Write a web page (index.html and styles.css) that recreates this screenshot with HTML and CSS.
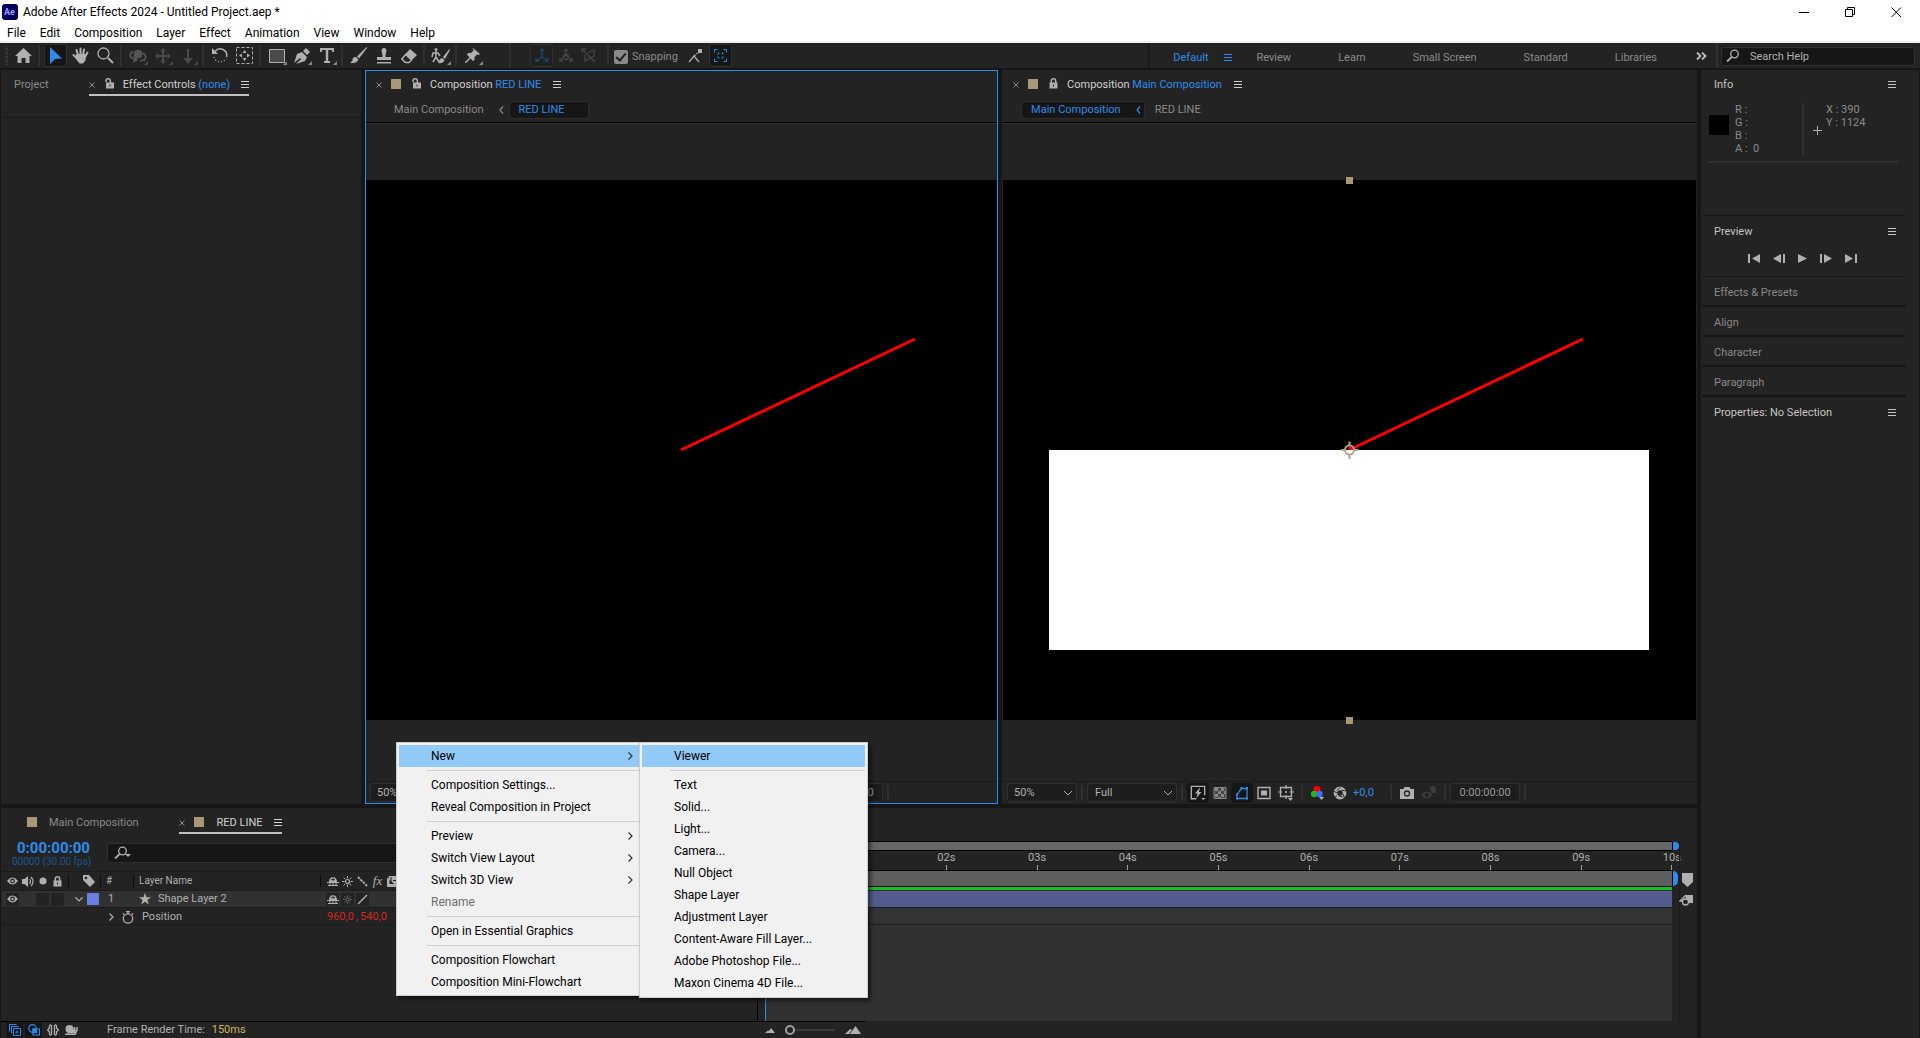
FILE: index.html
```html
<!DOCTYPE html>
<html lang="en">
<head>
  <meta charset="UTF-8">
  <meta name="viewport" content="width=device-width, initial-scale=1.0">
  <title>Adobe After Effects 2024 - Untitled Project.aep *</title>
  <link rel="stylesheet" href="styles.css">
</head>
<body>
  <!-- shared icons -->
  <svg class="sprite" width="0" height="0">
    <symbol id="menu" viewBox="0 0 8 7"><path d="M0 .5h8M0 3.5h8M0 6.5h8" stroke="currentColor"/></symbol>
    <symbol id="close" viewBox="0 0 6 6"><path d="M.5 .5l5 5M5.500 .5l-5 5" stroke="currentColor"/></symbol>
    <symbol id="unlock" viewBox="0 0 9 11"><path d="M1 4V3a2.200 2.200 0 0 1 4.400 0v2" fill="none" stroke="currentColor" stroke-width="1.500"/><path d="M1 4.500h8V10.500H1zM4.500 6.500v2h1v-2z" fill="currentColor" fill-rule="evenodd"/></symbol>
    <symbol id="lock" viewBox="0 0 9 11"><path d="M2.300 5V3a2.200 2.200 0 0 1 4.400 0v2" fill="none" stroke="currentColor" stroke-width="1.500"/><path d="M.5 4.500h8V10.500h-8zM4 6.500v2h1v-2z" fill="currentColor" fill-rule="evenodd"/></symbol>
    <symbol id="search" viewBox="0 0 14 14"><circle cx="8.500" cy="5" r="3.800" fill="none" stroke="currentColor" stroke-width="1.300"/><path d="M5.800 7.800L1 12.500" stroke="currentColor" stroke-width="1.800"/></symbol>
    <symbol id="down" viewBox="0 0 8 5"><path d="M.5 .5L4 4 7.500 .5" fill="none" stroke="currentColor" stroke-width="1.200"/></symbol>
    <symbol id="right" viewBox="0 0 5 8"><path d="M.5 .5L4 4 .5 7.500" fill="none" stroke="currentColor" stroke-width="1.200"/></symbol>
    <symbol id="left" viewBox="0 0 5 8"><path d="M4 .5L1 4l3 3.500" fill="none" stroke="currentColor" stroke-width="1.200"/></symbol>
    <symbol id="eye" viewBox="0 0 12 8"><path d="M0 4Q6 -3.500 12 4Q6 11.500 0 4z" fill="currentColor"/><circle cx="6" cy="4" r="2.600" fill="#232323"/><circle cx="6" cy="4" r="1.300" fill="currentColor"/></symbol>
    <symbol id="shy" viewBox="0 0 12 11"><path d="M2 6a4 5 0 0 1 8 0z" fill="currentColor"/><path d="M0 6.500h12M6 5v5M1 9.500h10M3 9.500V7M9 9.500V7" stroke="currentColor" fill="none"/><path d="M6 1v4M4 3.500h4" stroke="#232323" stroke-width=".8"/></symbol>
    <symbol id="sun" viewBox="0 0 11 11"><circle cx="5.500" cy="5.500" r="2" fill="none" stroke="currentColor" stroke-width="1.200"/><path d="M5.500 0v2.500M5.500 8.500V11M0 5.500h2.500M8.500 5.500H11M1.600 1.600l1.600 1.600M7.800 7.800l1.600 1.600M1.600 9.400l1.600-1.600M7.800 3.200l1.600-1.600" stroke="currentColor"/></symbol>
    <symbol id="fast" viewBox="0 0 18 18"><path d="M7 15.500H1.500V1.500h15v10" fill="none" stroke="currentColor" stroke-width="1.500"/><path d="M11.500 2.500L5.500 9.500h3L7 15l6-7h-3z" fill="currentColor"/><path d="M12.500 14.500h5L15 17z" fill="currentColor"/></symbol>
    <symbol id="grid" viewBox="0 0 14 14"><path d="M1 1.500h12v11H1z" fill="#444" stroke="#888"/><path d="M2 2h3v3H2zM8 2h3v3H8zM5 5h3v3H5zM11 5h1.500v3H11zM2 8h3v3H2zM8 8h3v3H8zM5 11h3v1.500H5z" fill="#888"/></symbol>
    <symbol id="mask" viewBox="0 0 16 14"><path d="M3 12.500V8.500L7.500 2.500H13V12.500z" fill="none" stroke="currentColor" stroke-width="1.300"/><path d="M2 11.500h2v2H2zM12 11.500h2v2h-2zM12 1h2v2h-2zM6.500 1h2v2h-2zM2 7.500h2v2H2z" fill="currentColor"/></symbol>
    <symbol id="region" viewBox="0 0 14 14"><path d="M1 1.500h12v11H1z" fill="none" stroke="currentColor" stroke-width="1.400"/><path d="M4 4.500h6v5H4z" fill="currentColor"/></symbol>
    <symbol id="guides" viewBox="0 0 16 16"><path d="M2.500 2.500h11v9h-11z" fill="none" stroke="currentColor" stroke-width="1.300"/><path d="M8 0v4M8 10v4M0 7h4M11.500 7H16M8 6v2M7 7h2" stroke="currentColor" stroke-width="1.200"/><path d="M10 13h5l-2.500 3z" fill="currentColor"/></symbol>
    <symbol id="aperture" viewBox="0 0 14 14"><circle cx="7" cy="7" r="4.600" fill="none" stroke="currentColor" stroke-width="3.600"/><path d="M4 4.500L8 .5M8.500 4.200l5 .8M10 8l1.500 4M5.500 9.800L10 11M4 9.500L2 11M4 7L.5 5" stroke="#232323" stroke-width=".9"/></symbol>
    <symbol id="camera" viewBox="0 0 14 12"><path d="M0 2h3.500l1-2h5l1 2H14v10H0z" fill="currentColor"/><circle cx="7" cy="6.500" r="2.500" fill="none" stroke="#232323" stroke-width="1.300"/></symbol>
    <symbol id="snapeye" viewBox="0 0 16 14"><path d="M8 1h2l.5-1h3l.5 1h1v6h-4z" fill="currentColor"/><path d="M0 9q6-7 12 0q-6 7-12 0z" fill="currentColor"/><circle cx="6" cy="9" r="2" fill="#232323"/></symbol>
  </svg>

  <header class="window-bar">
    <div class="title">
      <svg width="16" height="16"><rect width="16" height="16" rx="3" fill="#00005b"/><text x="2" y="11" class="logo">Ae</text></svg>
      <span>Adobe After Effects 2024 - Untitled Project.aep *</span>
      <div class="window-buttons">
        <button aria-label="Minimize"><svg width="11" height="11"><path d="M0 5.500h10" stroke="#000"/></svg></button>
        <button aria-label="Restore"><svg width="11" height="11"><path d="M.5 2.500h7v7h-7zM2.500 2.500v-2h7v7h-2" fill="none" stroke="#000"/></svg></button>
        <button aria-label="Close"><svg width="11" height="11"><path d="M.5 .5l9.500 9.500M10 .5L.5 10" stroke="#000"/></svg></button>
      </div>
    </div>
    <nav class="menubar">
      <button>File</button><button>Edit</button><button>Composition</button><button>Layer</button><button>Effect</button><button>Animation</button><button>View</button><button>Window</button><button>Help</button>
    </nav>
  </header>

  <div class="toolbar">
    <i class="grip"></i>
    <button aria-label="Home"><svg width="17" height="16"><path d="M8.500 0L17 8h-2.500v7h-4v-5h-4v5h-4V8H0z" fill="#b0b0b0"/></svg></button>
    <i class="sep"></i>
    <button class="on" aria-label="Selection"><svg width="13" height="17"><path d="M1 0l12 11.500-7 .5L1 17z" fill="#2d8ceb"/></svg></button>
    <button aria-label="Hand"><svg width="17" height="17" fill="none" stroke="#b0b0b0" stroke-width="2" stroke-linecap="round"><path d="M6 8L4.500 3M8.500 8V1.500M11 8l1-5.500M13 10l2.500-4.500M4.500 11L1.500 8"/><path d="M5 8h8l-.5 5-2 2.500H8L5 12z" fill="#b0b0b0"/></svg></button>
    <button aria-label="Zoom"><svg width="17" height="17" fill="none" stroke="#b0b0b0"><circle cx="6.500" cy="6.500" r="5.500" stroke-width="1.300"/><path d="M11 11l5 5" stroke-width="2"/></svg></button>
    <i class="sep"></i>
    <button class="off more" aria-label="Orbit"><svg width="18" height="16" fill="none" stroke="#555"><circle cx="9" cy="6" r="4" fill="#555"/><path d="M4 3Q-1 7 3 10l4 2M5 8l2.500 4L4 14M14 5q5 4 1 7l-4 1" stroke-width="1.800"/></svg></button>
    <button class="off more" aria-label="Pan"><svg width="16" height="16"><path d="M8 0l3 3.500H9V7h3.500V5L16 8l-3.500 3V9H9v3.500h2L8 16l-3-3.500h2V9H3.500v2L0 8l3.500-3v2H7V3.500H5z" fill="#4a4a4a"/></svg></button>
    <button class="off more" aria-label="Dolly"><svg width="12" height="16"><path d="M5 1h2v9h4l-5 6-5-6h4z" fill="#4a4a4a"/></svg></button>
    <i class="sep"></i>
    <button aria-label="Rotate"><svg width="18" height="17" fill="none" stroke="#b0b0b0"><path d="M4 4.500A6.500 6.500 0 0 1 15.500 10" stroke-width="1.500"/><path d="M1 1v6h6z" fill="#b0b0b0" stroke="none"/><path d="M3 10a6.500 6.500 0 0 0 12 1.500" stroke-width="1.300" stroke-dasharray="1 2"/></svg></button>
    <button aria-label="Pan Behind"><svg width="17" height="17" fill="none" stroke="#b0b0b0"><path d="M.5 .5h16v16H.5z" stroke-dasharray="3 2"/><path d="M8.500 3l2 3h-4zM8.500 14l2-3h-4zM3 8.500l3-2v4zM14 8.500l-3-2v4z" fill="#b0b0b0" stroke="none"/></svg></button>
    <i class="sep"></i>
    <button class="more" aria-label="Rectangle"><svg width="16" height="14"><path d="M.5 .5h15v13H.5z" fill="#4a4a4a" stroke="#b0b0b0"/></svg></button>
    <button class="more" aria-label="Pen"><svg width="16" height="16"><path d="M0 15L3 6l5-2 5 5-2 4-9 3 5-5-1-1zM9 3l3-3 4 4-3 3z" fill="#b0b0b0"/></svg></button>
    <button class="more" aria-label="Type"><svg width="14" height="15"><path d="M0 0h14v4h-1.500L11.500 2H8.200v11H10v2H4v-2h1.800V2H2.500L1.500 4H0z" fill="#b0b0b0"/></svg></button>
    <i class="sep"></i>
    <button aria-label="Brush"><svg width="17" height="17"><path d="M16.500 0L7 9.500l2 2L17 1zM6 10q-4 0-3.500 4L0 15.500q6 2 8.500-3z" fill="#b0b0b0"/></svg></button>
    <button aria-label="Clone Stamp"><svg width="16" height="16"><path d="M5.500 3a2.500 3 0 0 1 5 0L9.500 7v2H15v3H1V9h5.500V7zM1 14h14v1.500H1z" fill="#b0b0b0"/></svg></button>
    <button aria-label="Eraser"><svg width="18" height="16"><path d="M10 1l7 6-8 8H5L1 11z" fill="#b0b0b0"/><path d="M5.500 6.500l6 5.500L9 14.500H5.500L2 11z" fill="#232323" stroke="#b0b0b0" stroke-width="1.300"/></svg></button>
    <i class="sep"></i>
    <button class="more" aria-label="Roto Brush"><svg width="19" height="16"><g fill="none" stroke="#b0b0b0" stroke-width="1.500"><path d="M5 3v6l-3 5M5 9l3 5M1 9l1-4h5l2 3"/></g><circle cx="5" cy="1.500" r="1.500" fill="#b0b0b0"/><path d="M18.500 1L12 9l2 2L19 2zM11 10q-3 1-3 4l-1 1q5 1 6.500-3z" fill="#b0b0b0"/></svg></button>
    <i class="sep"></i>
    <button class="more" aria-label="Puppet Pin"><svg width="15" height="15"><path d="M8 0l7 6-1.500 1-1.500-.5L9.500 9v3L8 13 5.500 10.500 1 15H0v-1l4.500-4.500L2 6.500 3 5h3l3-3-1.500-1z" fill="#b0b0b0"/></svg></button>
    <i class="sep wide"></i>
    <button class="boxed" aria-label="Local Axis"><svg width="16" height="15" fill="none" stroke="#1f4670" stroke-width="1.300"><path d="M8 1v8l-6 4M8 9l6 4M6 3l2-2 2 2M2 10v3h3M14 10v3h-3"/></svg></button>
    <button class="off axis" aria-label="World Axis"><svg width="16" height="15" fill="none" stroke="#454545" stroke-width="1.300"><path d="M8 1v6l-6 6M8 7l6 6M6 3l2-2 2 2M2 10v3h3M14 10v3h-3"/><circle cx="8" cy="9" r="2.500"/></svg></button>
    <button class="off axis" aria-label="View Axis"><svg width="15" height="15" fill="none" stroke="#454545" stroke-width="1.300"><path d="M1 1l13 13M1 5V1h4M4 7v6l9-5V2L7 5"/></svg></button>
    <i class="sep after-axis"></i>
    <label class="snapping"><input type="checkbox" checked>Snapping</label>
    <button aria-label="Snap to edges"><svg width="14" height="14" fill="none" stroke="#b0b0b0" stroke-width="1.200"><path d="M1 13l5-6 5 6"/><path d="M6 7l5-4" stroke-dasharray="2 1"/><path d="M10 0h4v4h-4z" fill="#b0b0b0" stroke="none"/></svg></button>
    <button class="on" aria-label="Snap to features"><svg width="13" height="13" fill="none" stroke="#2d8ceb"><path d="M.5 3.500v-3h3M9.500 .5h3v3M12.500 9.500v3h-3M3.500 12.500h-3v-3M4 5.500V4h1.500M7.500 4H9v1.500M9 7.500V9H7.500M5.500 9H4V7.500"/></svg></button>
    <nav class="workspaces">
      <button class="current">Default <svg width="8" height="7"><use href="#menu"/></svg></button>
      <button>Review</button><button>Learn</button><button>Small Screen</button><button>Standard</button><button>Libraries</button>
      <button class="overflow" aria-label="More workspaces"><svg width="11" height="8" fill="none" stroke="#c0c0c0" stroke-width="1.800"><path d="M1 .5L4.500 4 1 7.500M6 .5L9.500 4 6 7.500"/></svg></button>
    </nav>
    <label class="help"><svg width="14" height="14"><use href="#search"/></svg><input type="search" placeholder="Search Help" aria-label="Search Help"></label>
  </div>

  <main class="workspace">
    <div class="center">
      <div class="top">
        <section class="panel effects">
          <div class="tabs">
            <button class="tab">Project</button>
            <div class="tab active">
              <svg class="x" width="6" height="6"><use href="#close"/></svg>
              <svg class="lock" width="9" height="11"><use href="#unlock"/></svg>
              <span>Effect Controls <b>(none)</b></span>
              <svg class="burger" width="8" height="7"><use href="#menu"/></svg>
            </div>
          </div>
        </section>

        <section class="panel comp focused">
          <div class="comp-title">
            <svg class="x" width="6" height="6"><use href="#close"/></svg>
            <i class="swatch"></i>
            <svg class="lock" width="9" height="11"><use href="#unlock"/></svg>
            <span>Composition <b>RED LINE</b></span>
            <svg class="burger" width="8" height="7"><use href="#menu"/></svg>
          </div>
          <nav class="crumbs">
            <a href="#" class="crumb">Main Composition</a>
            <svg class="arrow" width="5" height="8"><use href="#left"/></svg>
            <a href="#" class="crumb here short">RED LINE</a>
          </nav>
          <div class="stage">
            <svg width="960" height="540">
              <rect width="960" height="540" fill="#000"/>
              <path d="M479 270L713 159" stroke="#f00" stroke-width="3"/>
            </svg>
          </div>
          <div class="viewer-bar">
            <select class="mag" aria-label="Magnification"><option>50%</option></select>
            <i class="sep"></i>
            <select class="res" aria-label="Resolution"><option>Full</option></select>
            <i class="sep"></i>
            <button class="on" aria-label="Fast Previews"><svg width="16" height="16"><use href="#fast"/></svg></button>
            <button aria-label="Transparency Grid"><svg width="14" height="14"><use href="#grid"/></svg></button>
            <button class="on blue" aria-label="Mask Visibility"><svg width="16" height="14"><use href="#mask"/></svg></button>
            <button aria-label="Region of Interest"><svg width="14" height="14"><use href="#region"/></svg></button>
            <button aria-label="Guides"><svg width="16" height="16"><use href="#guides"/></svg></button>
            <i class="gap"></i>
            <button class="timecode">0:00:00:00</button>
            <i class="sep"></i>
          </div>
        </section>

        <section class="panel comp main-comp">
          <div class="comp-title">
            <svg class="x" width="6" height="6"><use href="#close"/></svg>
            <i class="swatch"></i>
            <svg class="lock" width="9" height="11"><use href="#lock"/></svg>
            <span>Composition <b>Main Composition</b></span>
            <svg class="burger" width="8" height="7"><use href="#menu"/></svg>
          </div>
          <nav class="crumbs">
            <a href="#" class="crumb here">Main Composition <svg width="5" height="8"><use href="#left"/></svg></a>
            <a href="#" class="crumb">RED LINE</a>
          </nav>
          <div class="stage">
            <svg width="960" height="540">
              <rect width="960" height="540" fill="#000"/>
              <path d="M479 270L713 159" stroke="#f00" stroke-width="3"/>
              <rect x="179" y="270" width="600" height="200" fill="#fff"/>
              <path d="M476 -3h7v7h-7zM476 537h7v7h-7z" fill="#a89878"/>
              <g fill="none" stroke="#b3a48c" stroke-width="2"><circle cx="479.500" cy="270" r="4.500"/><path d="M479.500 261.500v4M479.500 274.500v4.500M471 270h4M484 270h4.500"/></g>
              <path d="M480 270l3-2-2-1.500-3 1z" fill="#f00"/>
            </svg>
          </div>
          <div class="viewer-bar">
            <select class="mag" aria-label="Magnification"><option>50%</option></select>
            <i class="sep"></i>
            <select class="res" aria-label="Resolution"><option>Full</option></select>
            <i class="sep"></i>
            <button class="on" aria-label="Fast Previews"><svg width="16" height="16"><use href="#fast"/></svg></button>
            <button aria-label="Transparency Grid"><svg width="14" height="14"><use href="#grid"/></svg></button>
            <button class="on blue" aria-label="Mask Visibility"><svg width="16" height="14"><use href="#mask"/></svg></button>
            <button aria-label="Region of Interest"><svg width="14" height="14"><use href="#region"/></svg></button>
            <button aria-label="Guides"><svg width="16" height="16"><use href="#guides"/></svg></button>
            <i class="sep"></i>
            <button aria-label="Channels"><svg width="14" height="14"><circle cx="6" cy="3.500" r="3.400" fill="#f00"/><circle cx="3" cy="8" r="3.200" fill="#1abf1a"/><circle cx="8.500" cy="8" r="3.200" fill="#3d6bff"/><path d="M8 11h5l-2.500 3z" fill="#b0b0b0"/></svg></button>
            <button aria-label="Reset Exposure"><svg width="14" height="14"><use href="#aperture"/></svg></button>
            <button class="exposure">+0,0</button>
            <i class="sep"></i>
            <button aria-label="Take Snapshot"><svg width="14" height="12"><use href="#camera"/></svg></button>
            <button class="off" aria-label="Show Snapshot"><svg width="16" height="14"><use href="#snapeye"/></svg></button>
            <i class="sep"></i>
            <button class="timecode">0:00:00:00</button>
            <i class="sep"></i>
          </div>
        </section>
      </div>

      <section class="panel timeline">
        <div class="tabs">
          <button class="tab first"><i class="swatch"></i>Main Composition</button>
          <div class="tab active">
            <svg class="x" width="6" height="6"><use href="#close"/></svg>
            <i class="swatch"></i>
            <span>RED LINE</span>
            <svg class="burger" width="8" height="7"><use href="#menu"/></svg>
          </div>
        </div>
        <div class="timeline-body">
          <div class="layers">
            <div class="controls">
              <div class="current-time"><strong>0:00:00:00</strong><small>00000 (30.00 fps)</small></div>
              <label class="layer-search"><svg width="18" height="14"><use href="#search" width="14" height="14"/><path d="M11 8h6l-3 3z" fill="#b0b0b0"/></svg><input type="search" aria-label="Search layers"></label>
            </div>
            <div class="row head">
              <div class="features">
                <span><svg width="11" height="8"><use href="#eye"/></svg></span>
                <span><svg width="12" height="11"><path d="M0 3h2.500L6 0v11L2.500 8H0z" fill="#b0b0b0"/><path d="M7.500 3q2 2.500 0 5M9 1q4 4.500 0 9" fill="none" stroke="#b0b0b0" stroke-width="1.200"/></svg></span>
                <span><svg width="8" height="8"><circle cx="4" cy="4" r="3.500" fill="#b0b0b0"/></svg></span>
                <span><svg width="9" height="11"><use href="#lock"/></svg></span>
              </div>
              <div class="label"><svg width="12" height="12"><path d="M0 0h6l6 7-5 5-7-7z" fill="#b0b0b0"/><circle cx="3" cy="3" r="1.300" fill="#232323"/></svg></div>
              <div class="num">#</div>
              <div class="name">Layer Name</div>
              <div class="switches">
                <span><svg width="12" height="11"><use href="#shy"/></svg></span>
                <span><svg width="11" height="11"><use href="#sun"/></svg></span>
                <span><svg width="11" height="11"><path d="M1 1l9 9" stroke="#b0b0b0" stroke-width="1.800" stroke-dasharray="2.500 1"/></svg></span>
                <span class="fx">fx</span>
                <span><svg width="12" height="11"><path d="M2 .5h10v8H2zM.5 2v8.500H10" fill="#b0b0b0" stroke="#b0b0b0"/><path d="M4 1v7M6 4.500h4" stroke="#232323"/></svg></span>
              </div>
            </div>
            <div class="row selected">
              <div class="features">
                <span class="cell"><svg width="11" height="8"><use href="#eye"/></svg></span><span></span><span class="cell"></span><span class="cell"></span>
              </div>
              <div class="label"><svg width="8" height="5"><use href="#down"/></svg><i class="color"></i></div>
              <div class="num">1</div>
              <div class="name"><svg width="12" height="12"><path d="M6 0l1.500 4.300H12L8.400 7l1.400 4.500L6 8.800 2.200 11.500 3.600 7 0 4.300h4.500z" fill="#b0b0b0"/></svg>Shape Layer 2</div>
              <div class="switches">
                <span class="cell"><svg width="12" height="11"><use href="#shy"/></svg></span>
                <span class="cell dim"><svg width="9" height="9"><use href="#sun"/></svg></span>
                <span class="cell"><svg width="11" height="11"><path d="M1 10l9-9" stroke="#b0b0b0" stroke-width="1.500"/></svg></span>
              </div>
            </div>
            <div class="row property">
              <div class="prop-name">
                <svg width="5" height="8"><use href="#right"/></svg>
                <svg width="12" height="13" fill="none" stroke="#b0b0b0" stroke-width="1.300"><circle cx="6" cy="7.500" r="4.700"/><path d="M4 .7h4M6 1v2M10 2.500l1 1M2 2.500l-1 1"/></svg>
                Position
              </div>
              <div class="value">960,0<i>,</i>540,0</div>
            </div>
          </div>

          <div class="graph">
            <div class="nav-bar"><i class="handle"></i></div>
            <div class="ruler">
              <span></span><span></span><span>02s</span><span>03s</span><span>04s</span><span>05s</span><span>06s</span><span>07s</span><span>08s</span><span>09s</span><span>10s</span>
            </div>
            <div class="work-area"><i class="handle"></i></div>
            <div class="cache"></div>
            <div class="tracks">
              <div class="track clip"></div>
              <div class="track"></div>
            </div>
          </div>
          <div class="side-icons">
            <svg width="11" height="14"><path d="M0 0h11v9l-5.500 5L0 9z" fill="#b0b0b0"/></svg>
            <svg width="14" height="12"><path d="M6 1h8v8H8z" fill="#b0b0b0"/><path d="M7 1L1 7h5" fill="none" stroke="#b0b0b0" stroke-width="1.300"/><circle cx="6.500" cy="8" r="3" fill="#232323" stroke="#b0b0b0" stroke-width="1.300"/></svg>
          </div>
        </div>
        <div class="status">
          <button class="on" aria-label="Layer Switches"><svg width="12" height="12" fill="none" stroke="#2d8ceb"><path d="M.5 7.500v-7h7M2.500 9.500v-7h7"/><path d="M4.500 4.500h7v7h-7zM8 6.500v3M6.500 8h3"/></svg></button>
          <button class="on" aria-label="Transfer Controls"><svg width="12" height="12" fill="none" stroke="#2d8ceb" stroke-width="1.200"><circle cx="4.500" cy="4.500" r="3.800"/><path d="M5 5h6.500v6H5z"/><path d="M5 5h3.500v3.500H5z" fill="#2d8ceb"/></svg></button>
          <button aria-label="In Out Duration"><svg width="12" height="12" fill="none" stroke="#b0b0b0" stroke-width="1.300"><path d="M4 .7Q2 1 2.500 4L.7 6l1.800 2Q2 11 4 11.300M8 .7Q10 1 9.500 4L11.300 6 9.500 8Q10 11 8 11.300"/><path d="M4.500 1v10M7.500 1v10"/></svg></button>
          <button aria-label="Render Time"><svg width="13" height="10"><circle cx="4.500" cy="4" r="4" fill="#b0b0b0"/><path d="M0 9.500h10L12 5V2M9.500 2v3" fill="none" stroke="#b0b0b0" stroke-width="1.500"/><path d="M1 8.500h9l1-4H8z" fill="#b0b0b0"/></svg></button>
          <p>Frame Render Time: <em>150ms</em></p>
          <div class="zoom-control">
            <svg width="10" height="5"><path d="M0 5l3-2.500L4 3l2-3 4 5z" fill="#b0b0b0"/></svg>
            <input type="range" min="0" max="100" value="0" aria-label="Timeline zoom">
            <svg width="16" height="8"><path d="M0 8l5-5 2 1-3 4zM5 8l5.500-8L16 8z" fill="#b0b0b0"/></svg>
          </div>
        </div>
      </section>
    </div>

    <aside class="sidebar">
      <section class="info">
        <h2>Info <svg width="8" height="7"><use href="#menu"/></svg></h2>
        <div class="readout">
          <i class="black"></i>
          <ul><li>R :</li><li>G :</li><li>B :</li><li>A : &nbsp;0</li></ul>
          <svg width="9" height="9"><path d="M4.500 0v9M0 4.500h9" stroke="#b0b0b0"/></svg>
          <ul class="xy"><li>X : 390</li><li>Y : 1124</li></ul>
        </div>
      </section>
      <section class="preview">
        <h2>Preview <svg width="8" height="7"><use href="#menu"/></svg></h2>
        <div class="transport">
          <button aria-label="First Frame"><svg width="12" height="9"><path d="M0 0h2v9H0zM12 0v9L4 4.500z" fill="#b0b0b0"/></svg></button>
          <button aria-label="Previous Frame"><svg width="12" height="9"><path d="M8 0v9L0 4.500zM10 0h2v9h-2z" fill="#b0b0b0"/></svg></button>
          <button aria-label="Play"><svg width="9" height="9"><path d="M0 0l9 4.500L0 9z" fill="#b0b0b0"/></svg></button>
          <button aria-label="Next Frame"><svg width="12" height="9"><path d="M0 0h2v9H0zM4 0l8 4.500L4 9z" fill="#b0b0b0"/></svg></button>
          <button aria-label="Last Frame"><svg width="12" height="9"><path d="M0 0l8 4.500L0 9zM10 0h2v9h-2z" fill="#b0b0b0"/></svg></button>
        </div>
      </section>
      <button class="collapsed">Effects &amp; Presets</button>
      <button class="collapsed">Align</button>
      <button class="collapsed">Character</button>
      <button class="collapsed">Paragraph</button>
      <section class="properties"><h2>Properties: No Selection <svg width="8" height="7"><use href="#menu"/></svg></h2></section>
    </aside>
  </main>

  <!-- context menu + "New" submenu -->
  <div class="context">
    <div class="popup parent">
      <button class="hot">New <svg width="5" height="8"><use href="#right"/></svg></button>
      <hr>
      <button>Composition Settings...</button>
      <button>Reveal Composition in Project</button>
      <hr>
      <button>Preview <svg width="5" height="8"><use href="#right"/></svg></button>
      <button>Switch View Layout <svg width="5" height="8"><use href="#right"/></svg></button>
      <button>Switch 3D View <svg width="5" height="8"><use href="#right"/></svg></button>
      <button disabled>Rename</button>
      <hr>
      <button>Open in Essential Graphics</button>
      <hr>
      <button>Composition Flowchart</button>
      <button>Composition Mini-Flowchart</button>
    </div>
    <div class="popup sub">
      <button class="hot">Viewer</button>
      <hr>
      <button>Text</button>
      <button>Solid...</button>
      <button>Light...</button>
      <button>Camera...</button>
      <button>Null Object</button>
      <button>Shape Layer</button>
      <button>Adjustment Layer</button>
      <button>Content-Aware Fill Layer...</button>
      <button>Adobe Photoshop File...</button>
      <button>Maxon Cinema 4D File...</button>
    </div>
  </div>
</body>
</html>
```
FILE: styles.css
```css
* {
  box-sizing: border-box;
}
body {
  margin: 0;
  height: 100vh;
  display: flex;
  flex-direction: column;
  overflow: hidden;
  background: #161616;
  color: #b0b0b0;
  font-family: Roboto, "Open Sans", sans-serif;
  font-size: 11px;
  line-height: 14px;
}
button, input, select {
  font: inherit;
  color: inherit;
  background: none;
  border: none;
  padding: 0;
  margin: 0;
}
svg {
  flex: none;
  display: block;
}
i, em, b, small {
  font-style: normal;
  font-weight: normal;
}
.sprite {
  position: absolute;
}

/* title + menu bar */
.window-bar {
  background: #fff;
  color: #000;
  font-size: 12px;
  border-bottom: 2px solid #f0f0f0;
}
.title {
  display: flex;
  align-items: center;
  gap: 5px;
  height: 24px;
  padding-left: 2px;
}
.logo {
  font-size: 9px;
  font-weight: bold;
  fill: #9999ff;
}
.window-buttons {
  display: flex;
  margin-left: auto;
  padding-right: 1px;
  height: 20px;
}
.window-buttons button {
  width: 46px;
  display: flex;
  align-items: center;
  justify-content: center;
}
.menubar {
  display: flex;
  height: 17px;
  gap: 14px;
  padding-left: 7px;
}

/* toolbar */
.toolbar {
  display: flex;
  align-items: center;
  height: 25px;
  background: #232323;
}
.toolbar > button {
  position: relative;
  width: 25px;
  height: 23px;
  display: flex;
  align-items: center;
  justify-content: center;
}
.toolbar > .on, .toolbar > .boxed {
  width: 23px;
  margin: 0 1px;
  background: #161616;
  border: 1px solid #303030;
  border-radius: 3px;
}
.toolbar > .boxed {
  background: #202020;
}
.toolbar > .axis {
  width: 23px;
}
.more::after {
  content: "";
  position: absolute;
  right: 2px;
  bottom: 2px;
  border: 2px solid transparent;
  border-right-color: #888;
  border-bottom-color: #888;
}
.off.more::after {
  border-right-color: #4a4a4a;
  border-bottom-color: #4a4a4a;
}
.grip {
  width: 3px;
  height: 19px;
  margin: 0 3px 0 5px;
  background: repeating-linear-gradient(#3a3a3a 0 1px, #232323 1px 2px);
}
.sep {
  width: 2px;
  height: 21px;
  margin: 0 3px 0 2px;
  background: #303030;
  flex: none;
}
.sep.wide {
  height: 25px;
  margin: 0 18px 0 24px;
}
.sep.after-axis {
  margin: 0 5px 0 7px;
}
.snapping {
  display: flex;
  align-items: center;
  gap: 4px;
  height: 25px;
  padding-top: 3px;
  margin-right: 5px;
  color: #8a8a8a;
}
.snapping input {
  appearance: none;
  width: 14px;
  height: 14px;
  border-radius: 2px;
  background: #8a8a8a;
  display: flex;
  align-items: center;
  justify-content: center;
}
.snapping input:checked::after {
  content: "";
  width: 4px;
  height: 8px;
  margin-bottom: 2px;
  border: solid #232323;
  border-width: 0 2px 2px 0;
  transform: rotate(40deg);
}
.workspaces {
  margin-left: auto;
  display: flex;
  align-items: center;
  height: 25px;
  padding: 4px 9px 0 23px;
  gap: 47px;
  border-left: 2px solid #1b1b1b;
  border-right: 2px solid #303030;
  color: #8a8a8a;
}
.workspaces .current {
  display: flex;
  align-items: center;
  gap: 16px;
  margin-right: -23px;
  color: #2d8ceb;
}
.workspaces .overflow {
  margin: 0 0 4px -8px;
}
.help {
  display: flex;
  align-items: center;
  gap: 10px;
  width: 194px;
  height: 19px;
  margin: 1px 5px 0 3px;
  padding: 0 0 0 4px;
  background: #161616;
  border: 1px solid #303030;
  border-radius: 3px;
}
.help input {
  width: 150px;
  padding-top: 2px;
}
.help input::placeholder {
  color: #b0b0b0;
}
input:focus {
  outline: none;
}

/* panels */
.workspace {
  flex: 1;
  min-height: 0;
  display: flex;
  gap: 4px;
  padding: 2px 1px 0 1px;
}
.center {
  flex: 1;
  min-width: 0;
  display: flex;
  flex-direction: column;
  gap: 4px;
}
.top {
  flex: 1;
  min-height: 0;
  display: flex;
  gap: 4px;
}
.panel {
  background: #232323;
  min-width: 0;
}
.panel b {
  color: #2d8ceb;
}
.effects {
  flex: 0 0 360px;
}
.effects .tabs {
  height: 48px;
  padding: 0 0 20px 13px;
  border-bottom: 1px solid #1b1b1b;
}
.tabs {
  display: flex;
  color: #8a8a8a;
}
.tabs .tab {
  display: flex;
  align-items: center;
  height: 26px;
  padding-top: 3px;
}
.tabs .tab.active {
  color: #d0d0d0;
  border-bottom: 2px solid #c0c0c0;
  padding-top: 5px;
}
.effects .tab.active {
  margin-left: 40px;
}
.x {
  color: #8a8a8a;
}
.lock {
  color: #b0b0b0;
  margin: 0 9px 3px 10px;
}
.burger {
  margin-left: 11px;
}
.swatch {
  width: 10px;
  height: 10px;
  margin-bottom: 2px;
  background: #a89878;
  flex: none;
}
.comp {
  display: flex;
  flex-direction: column;
  border: 1px solid #232323;
  flex: 633 1 0;
}
.main-comp {
  flex-grow: 695;
}
.focused {
  border-color: #2d8ceb;
}
.comp-title {
  display: flex;
  align-items: center;
  height: 27px;
  padding-left: 10px;
  color: #d0d0d0;
}
.comp-title .swatch {
  margin-left: 9px;
}
.comp-title .lock {
  margin-left: 11px;
}
.comp-title .burger {
  margin-left: 12px;
}
.crumbs {
  display: flex;
  align-items: center;
  height: 26px;
  padding: 0 0 2px 18px;
  border-bottom: 1px solid #323232;
  box-shadow: inset 0 -1px #000;
}
.crumb {
  display: flex;
  align-items: center;
  height: 18px;
  padding: 0 10px;
  color: #8a8a8a;
  text-decoration: none;
}
.crumb.here {
  gap: 15px;
  padding: 0 3px 0 9px;
  background: #161616;
  border: 1px solid #2c2c2c;
  border-radius: 3px;
  color: #2d8ceb;
}
.crumb.short {
  width: 80px;
}
.arrow {
  color: #8a8a8a;
  margin: 0 5px;
}
.stage {
  flex: 1;
  min-height: 0;
  display: flex;
  align-items: center;
  justify-content: center;
  padding-bottom: 5px;
  overflow: hidden;
}
.stage svg {
  overflow: visible;
}
.viewer-bar {
  display: flex;
  align-items: center;
  height: 22px;
  padding-left: 4px;
  border-top: 1px solid #1a1a1a;
  overflow: hidden;
}
.viewer-bar select {
  appearance: none;
  height: 19px;
  padding-left: 6px;
  border: 1px solid #303030;
  border-radius: 3px;
  background: linear-gradient(45deg, transparent 45%, #b0b0b0 45% 60%, transparent 60%) right 8px center / 4px 4px no-repeat,
    linear-gradient(-45deg, transparent 45%, #b0b0b0 45% 60%, transparent 60%) right 4px center / 4px 4px no-repeat, #1d1d1d;
}
.viewer-bar .mag {
  width: 70px;
}
.viewer-bar .res {
  width: 90px;
  padding-left: 7px;
}
.viewer-bar .sep {
  height: 15px;
  margin: 0 4px;
}
.viewer-bar button {
  width: 22px;
  height: 20px;
  flex: none;
  display: flex;
  align-items: center;
  justify-content: center;
}
.viewer-bar .on {
  background: #161616;
  border-radius: 3px;
}
.viewer-bar .blue {
  color: #2d8ceb;
}
.viewer-bar .off {
  color: #3c3c3c;
}
.viewer-bar .exposure {
  width: 35px;
  justify-content: flex-start;
  padding-left: 2px;
  color: #2d8ceb;
}
.viewer-bar .timecode {
  width: 70px;
  height: 19px;
  border: 1px solid #303030;
  border-radius: 3px;
  background: #1d1d1d;
  color: #9a9a9a;
}
.gap {
  width: 153px;
}

/* timeline */
.timeline {
  flex: 0 0 230px;
  display: flex;
  flex-direction: column;
}
.timeline .tabs {
  height: 33px;
  padding-left: 26px;
}
.timeline .first {
  gap: 12px;
  margin-right: 40px;
}
.timeline .active .swatch {
  margin: 0 13px 2px 9px;
}
.timeline-body {
  flex: 1;
  min-height: 0;
  display: flex;
}
.layers {
  width: 757px;
  border-right: 1px solid #000;
}
.controls {
  display: flex;
  height: 30px;
  padding: 0 0 0 11px;
}
.current-time {
  width: 95px;
  color: #2d8ceb;
}
.current-time strong {
  display: block;
  font-size: 15px;
  padding-left: 5px;
}
.current-time small {
  display: block;
  font-size: 10px;
  color: #1d5590;
}
.layer-search {
  flex: 1;
  display: flex;
  align-items: center;
  height: 20px;
  margin: 2px 100px 0 0;
  padding-left: 6px;
  background: #161616;
  border: 1px solid #303030;
  border-radius: 2px;
}
.layer-search input {
  flex: 1;
}
.row {
  display: flex;
  align-items: center;
  height: 17px;
  margin-left: 1px;
  border-bottom: 1px solid #1b1b1b;
}
.row.head {
  height: 20px;
  border-top: 1px solid #1b1b1b;
  font-size: 10px;
}
.row.selected {
  background: #313131;
}
.row.property {
  padding-top: 2px;
}
.features, .switches, .label, .num, .name {
  display: flex;
  align-items: center;
}
.head > div + div {
  box-shadow: -1px 0 #0c0c0c;
  height: 12px;
}
.features {
  width: 67px;
  padding-left: 3px;
}
.features span, .switches span {
  width: 15px;
  height: 13px;
  display: flex;
  align-items: center;
  justify-content: center;
}
.cell {
  background: #232323;
  background-clip: content-box;
  padding: 0 1px;
}
.dim {
  color: #707070;
}
.label {
  width: 32px;
  justify-content: flex-end;
  padding-right: 2px;
  gap: 4px;
}
.head .label {
  padding-right: 6px;
}
.color {
  width: 12px;
  height: 12px;
  background: #6a7ee0;
}
.num {
  width: 33px;
  padding-left: 7px;
}
.head .num {
  padding-left: 5px;
}
.name {
  width: 187px;
  padding-left: 5px;
}
.selected .name {
  gap: 7px;
}
.switches {
  padding-left: 4px;
}
.switches .fx {
  font: italic 13px "Liberation Serif", serif;
}
.property .prop-name {
  display: flex;
  align-items: center;
  gap: 8px;
  width: 325px;
  padding-left: 107px;
}
.value {
  color: #d02828;
}
.value i {
  padding: 0 2px;
}
.graph {
  flex: 1;
  padding-left: 7px;
  display: flex;
  flex-direction: column;
  min-width: 0;
}
.graph > div {
  margin-right: 7px;
}
.nav-bar, .work-area {
  position: relative;
  height: 10px;
  background: #666;
  border: solid #000;
  border-width: 1px 0;
}
.work-area {
  height: 17px;
  background: #5e5e5e;
}
.handle {
  position: absolute;
  left: 100%;
  top: 0;
  bottom: 0;
  width: 7px;
  border-left: 1px solid #000;
  border-radius: 0 5px 5px 0;
  background: #2d8ceb;
}
.work-area .handle {
  width: 6px;
}
.ruler {
  display: flex;
  justify-content: space-between;
  height: 19px;
}
.ruler span {
  width: 0;
  display: flex;
  flex-direction: column;
  align-items: center;
  justify-content: flex-end;
}
.ruler span::after {
  content: "";
  width: 1px;
  height: 5px;
  background: #a0a0a0;
  flex: none;
}
.cache {
  height: 3px;
  background: #14bf24;
}
.tracks {
  flex: 1;
  padding-top: 1px;
  background: #313131;
  border-left: 1px solid #2d8ceb;
}
.track {
  height: 17px;
  background: #343434;
  border-bottom: 1px solid #1f1f1f;
}
.track.clip {
  background: #525c8c;
}
.side-icons {
  width: 18px;
  padding: 32px 4px 0 0;
  border-left: 1px solid #1b1b1b;
  display: flex;
  flex-direction: column;
  align-items: flex-end;
  gap: 7px;
}
.status {
  display: flex;
  align-items: center;
  width: 864px;
  height: 17px;
  padding-left: 5px;
  border-top: 1px solid #000;
}
.status button {
  width: 17px;
  height: 16px;
  margin-right: 2px;
  display: flex;
  align-items: center;
  justify-content: center;
}
.status .on {
  background: #161616;
}
.status p {
  margin: 0 0 0 25px;
}
.status em {
  color: #cdb35a;
  margin-left: 4px;
}
.zoom-control {
  margin-left: auto;
  padding-right: 4px;
  display: flex;
  align-items: center;
  gap: 10px;
}
.zoom-control input {
  appearance: none;
  width: 50px;
  height: 2px;
  background: #3a3a3a;
}
.zoom-control input::-webkit-slider-thumb {
  appearance: none;
  width: 10px;
  height: 10px;
  border: 2px solid #a0a0a0;
  border-radius: 50%;
  background: #232323;
}

/* sidebar */
.sidebar {
  flex: 0 0 218px;
  padding: 0 13px 0 1px;
  background: #232323;
}
.sidebar h2 {
  display: flex;
  align-items: center;
  justify-content: space-between;
  height: 30px;
  margin: 0;
  padding: 1px 10px 0 12px;
  font-size: 11px;
  font-weight: normal;
  color: #c4c4c4;
}
.info {
  height: 145px;
}
.info h2 {
  height: 28px;
}
.readout {
  display: flex;
  margin: 0 8px 0 5px;
  padding: 5px 0 6px 2px;
  border-bottom: 2px solid #303030;
  color: #8a8a8a;
}
.readout .black {
  width: 20px;
  height: 20px;
  margin: 12px 6px 0 0;
  background: #000;
}
.readout ul {
  list-style: none;
  margin: 0;
  padding: 0;
  width: 69px;
  line-height: 13px;
  border-right: 2px solid #303030;
}
.readout svg {
  margin: 23px 4px 0 9px;
}
.readout .xy {
  border: none;
}
.preview {
  border-top: 1px solid #161616;
  padding-bottom: 6px;
}
.transport {
  display: flex;
  align-items: center;
  gap: 13px;
  height: 24px;
  padding-left: 46px;
}
.transport button {
  display: flex;
}
.collapsed {
  display: block;
  width: 100%;
  height: 30px;
  padding: 3px 12px 0;
  text-align: left;
  color: #8a8a8a;
  border-bottom: 2px solid #161616;
}
.preview + .collapsed {
  border-top: 1px solid #161616;
  height: 31px;
}

/* context menu */
.context {
  position: absolute;
  left: 396px;
  top: 742px;
  display: flex;
  align-items: flex-start;
  color: #000;
  font-size: 12px;
}
.popup {
  padding: 2px;
  background: #f1f1f1;
  border: 1px solid #ccc;
  box-shadow: 3px 3px 4px rgba(0, 0, 0, .5);
}
.popup.parent {
  width: 244px;
  padding-right: 0;
}
.popup.sub {
  width: 229px;
  padding-bottom: 3px;
  margin-left: -1px;
}
.popup button {
  display: flex;
  align-items: center;
  justify-content: space-between;
  width: 100%;
  height: 22px;
  padding: 0 6px 0 32px;
  text-align: left;
}
.popup button svg {
  color: #333;
}
.popup .hot {
  background: #91c9f7;
}
.popup button:disabled {
  color: #6d6d6d;
}
.popup hr {
  height: 1px;
  margin: 3px 0 3px 28px;
  border: none;
  background: #d0d0d0;
}
```
